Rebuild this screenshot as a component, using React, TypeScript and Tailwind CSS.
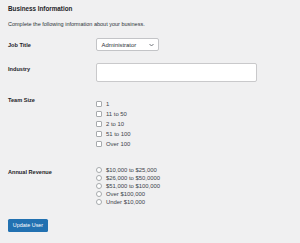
import React from 'react';

const teamSizes = ['1', '11 to 50', '2 to 10', '51 to 100', 'Over 100'];
const revenues = [
  '$10,000 to $25,000',
  '$26,000 to $50,0000',
  '$51,000 to $100,000',
  'Over $100,000',
  'Under $10,000',
];

const App = () => {
  return (
    <div className="w-[300px] h-[243px] bg-[#f0f0f1] px-[8px] pt-[5px] font-['Liberation_Sans',Arial,sans-serif] text-[#1d2327] overflow-hidden">
      <h2 className="text-[6.3px] font-bold leading-[8px]">Business Information</h2>
      <p className="mt-[8px] text-[5.5px] leading-[6px] text-[#2c3338]">
        Complete the following information about your business.
      </p>

      {/* job title */}
      <div className="mt-[11px] flex items-center h-[13px]">
        <div className="w-[88px] text-[5.6px] font-bold leading-[6px]">Job Title</div>
        <div className="w-[63px] h-[13px] bg-white border border-[#c3c4c7] rounded-[2px] flex items-center justify-between pl-[4.5px] pr-[4px]">
          <span className="text-[5.9px] leading-[6px] text-[#2c3338]">Administrator</span>
          <svg width="5" height="4" viewBox="0 0 10 8" fill="none" stroke="#50575e" strokeWidth="1.6">
            <path d="M1 2l4 4 4-4" />
          </svg>
        </div>
      </div>

      {/* industry */}
      <div className="mt-[12px] flex items-start">
        <div className="w-[88px] pt-[3px] text-[5.6px] font-bold leading-[6px]">Industry</div>
        <div className="w-[161px] h-[19px] bg-white border border-[#c9c9cb] rounded-[2px]" />
      </div>

      {/* team size */}
      <div className="mt-[15px] flex items-start">
        <div className="w-[88px] text-[5.6px] font-bold leading-[6px]">Team Size</div>
        <div className="pt-[4px] flex flex-col gap-[4px]">
          {teamSizes.map((s) => (
            <div key={s} className="flex items-center h-[6px] gap-[4px]">
              <span className="w-[6px] h-[6px] bg-white border border-[#a7aaad] rounded-[1px]" />
              <span className="text-[5.9px] leading-[6px] text-[#3c434a]">{s}</span>
            </div>
          ))}
        </div>
      </div>

      {/* annual revenue */}
      <div className="mt-[19.5px] flex items-start">
        <div className="w-[88px] pt-[2.5px] text-[5.6px] font-bold leading-[6px]">Annual Revenue</div>
        <div className="flex flex-col gap-[2px]">
          {revenues.map((r) => (
            <div key={r} className="flex items-center h-[6px] gap-[4px]">
              <span className="w-[6px] h-[6px] bg-white border border-[#a7aaad] rounded-full" />
              <span className="text-[5.9px] leading-[6px] text-[#3c434a]">{r}</span>
            </div>
          ))}
        </div>
      </div>

      <button className="mt-[14.5px] w-[40px] h-[12.5px] bg-[#2271b1] rounded-[1.5px] text-white text-[5.4px] leading-[6px] flex items-center justify-center">
        Update User
      </button>
    </div>
  );
};

export default App;
